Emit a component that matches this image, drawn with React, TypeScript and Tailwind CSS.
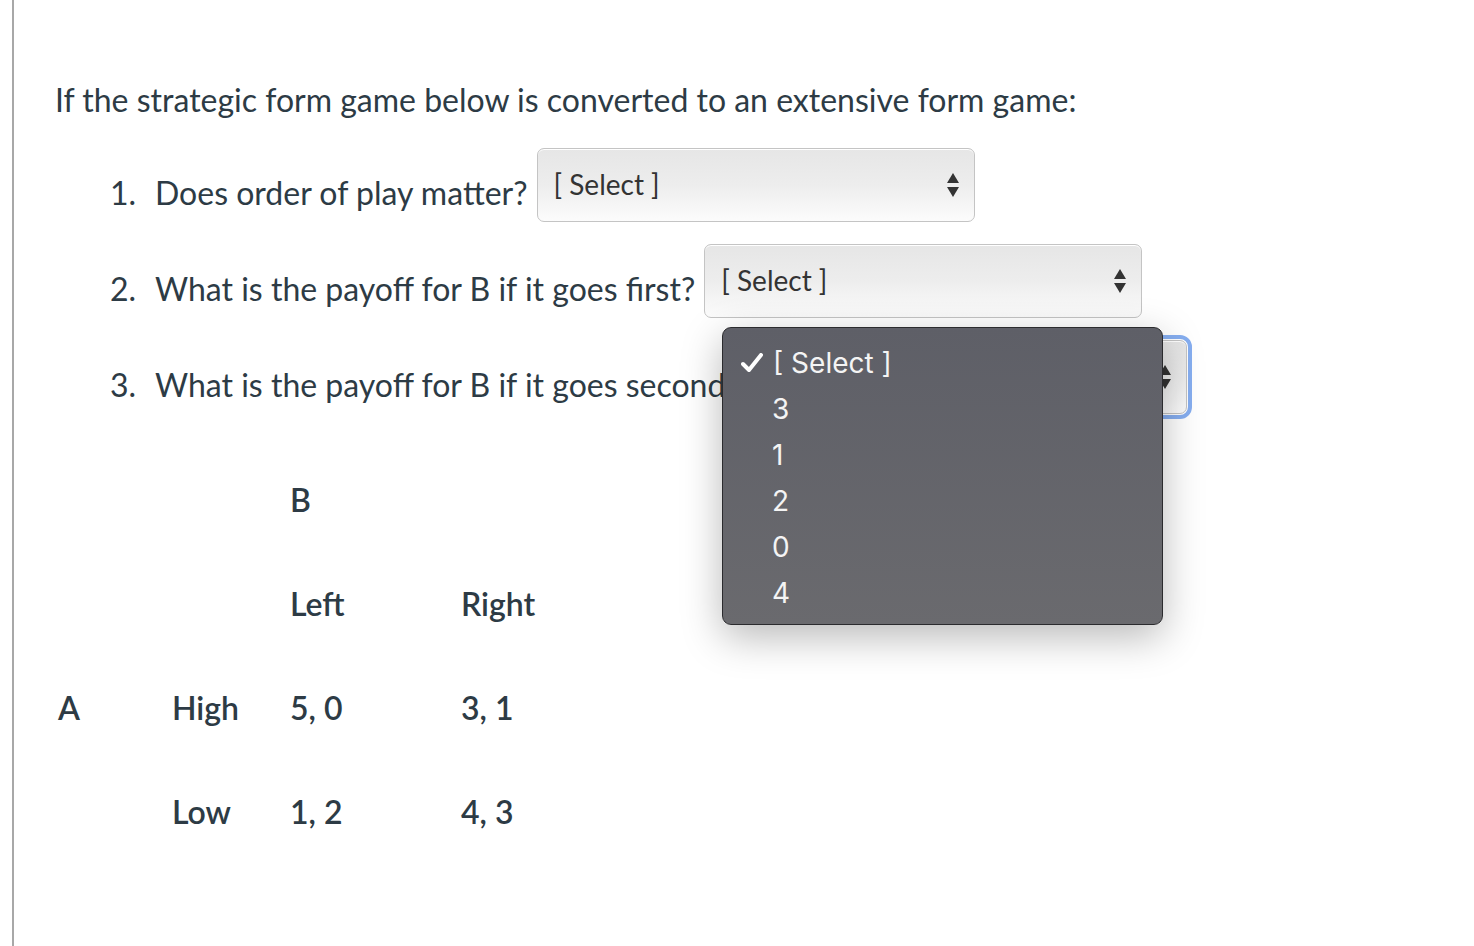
import React from 'react';

const lato = { fontFamily: 'Lato, "Open Sans", sans-serif' };

const Arrows = () => (
    <svg width="14" height="26" viewBox="0 0 14 26" className="shrink-0">
        <path d="M7 1 L13 11 L1 11 Z" fill="#333" />
        <path d="M7 25 L13 15 L1 15 Z" fill="#333" />
    </svg>
);

const Check = () => (
    <svg width="22" height="20" viewBox="0 0 22 20" className="shrink-0">
        <path d="M2 11 L8 17 L20 2" fill="none" stroke="#fff" strokeWidth="4" strokeLinecap="round" strokeLinejoin="round" />
    </svg>
);

const FakeSelect = ({ focused = false }: { focused?: boolean }) => (
    <div
        className={`h-[74px] w-[438px] shrink-0 rounded-[7px] border border-[#c4c4c4] bg-gradient-to-b from-[#e6e6e6] via-[#ededed] to-[#fcfcfc] flex items-center justify-between pl-[16px] pr-[14px] shadow-[inset_0_1px_0_#fff] ${
            focused ? 'outline outline-4 outline-[#86aef0] outline-offset-[1px]' : ''
        }`}
    >
        <span className="text-[28px] text-[#333] -mt-[2px]">[ Select ]</span>
        <Arrows />
    </div>
);

const questions = [
    'Does order of play matter?',
    'What is the payoff for B if it goes first?',
    'What is the payoff for B if it goes second?',
];

const options = ['3', '1', '2', '0', '4'];

export default function App() {
    return (
        <div className="w-full min-h-screen bg-white relative text-[#2d3b45]" style={lato}>
            <div className="ml-[12px] min-h-[946px] border-l-2 border-[#a8a8a8] pl-[41px]">
                <p className="pt-[77px] text-[32px] leading-[45px]">
                    If the strategic form game below is converted to an extensive form game:
                </p>

                <ol className="mt-[26px] pl-[55px] flex flex-col gap-[22px]">
                    {questions.map((q, i) => (
                        <li key={i} className="flex items-start">
                            <span className="pt-[22px] w-[45px] text-[32px] leading-[45px]">{i + 1}.</span>
                            <span className="pt-[22px] text-[32px] leading-[45px] whitespace-nowrap">{q}</span>
                            <div className="ml-[9px]">
                                <FakeSelect focused={i === 2} />
                            </div>
                        </li>
                    ))}
                </ol>

                {/* payoff matrix */}
                <div className="mt-[34px] grid grid-cols-[117px_118px_171px_120px] auto-rows-[104px] items-center text-[32px] font-semibold text-[#2d3b45]">
                    <div />
                    <div />
                    <div>B</div>
                    <div />

                    <div />
                    <div />
                    <div>Left</div>
                    <div>Right</div>

                    <div className="pl-[3px]">A</div>
                    <div>High</div>
                    <div>5, 0</div>
                    <div>3, 1</div>

                    <div />
                    <div>Low</div>
                    <div>1, 2</div>
                    <div>4, 3</div>
                </div>
            </div>

            {/* open native dropdown menu */}
            <div
                className="absolute left-[722px] top-[327px] w-[441px] h-[298px] rounded-[9px] border border-[#2b2b2e] bg-gradient-to-b from-[#5e5f67] to-[#6a6a6e] shadow-[0_12px_40px_rgba(0,0,0,0.28)] pt-[12px] text-[#f4f4f4]"
                style={{ fontFamily: 'Inter, "Liberation Sans", sans-serif' }}
            >
                <div className="flex items-center h-[46px] pl-[18px] text-[28px]">
                    <span className="w-[32px] flex items-center">
                        <Check />
                    </span>
                    <span>[ Select ]</span>
                </div>
                {options.map((o) => (
                    <div key={o} className="flex items-center h-[46px] pl-[49px] text-[28px]">
                        {o}
                    </div>
                ))}
            </div>
        </div>
    );
}
